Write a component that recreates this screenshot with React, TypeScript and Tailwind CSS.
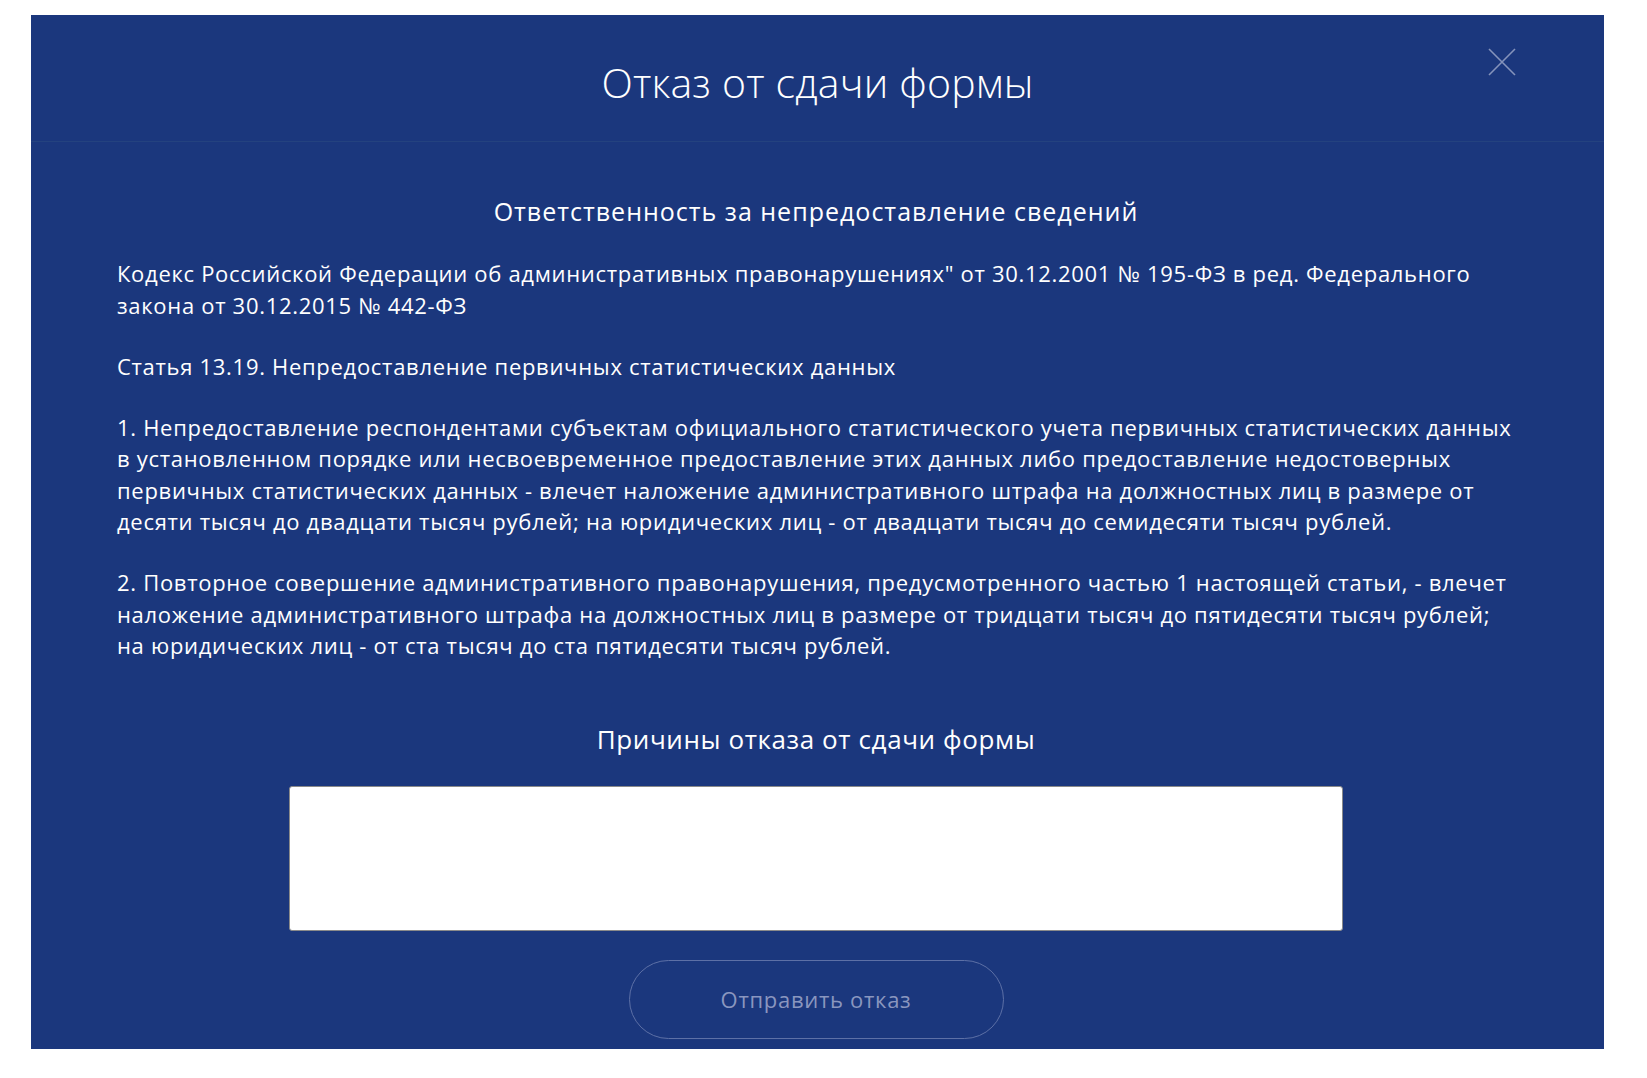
import React from 'react';

const font = { fontFamily: '"Open Sans", "Liberation Sans", sans-serif' };

export default function App() {
    const [reason, setReason] = React.useState('');

    return (
        <div className="w-full h-[1078px] bg-white pt-[15px] pl-[31px]" style={font}>
            <div className="w-[1573px] h-[1034px] bg-[#1b377d] overflow-hidden flex flex-col">
                {/* Header */}
                <div className="relative h-[127px] shrink-0 border-b border-[#24427f] flex items-center justify-center pt-[10px]">
                    <h1 className="text-[41px] font-light text-white tracking-[0.2px]">Отказ от сдачи формы</h1>
                    <button className="absolute right-[88px] top-[33px] w-[28px] h-[28px] text-[#8593bb]">
                        <svg viewBox="0 0 28 28" className="w-full h-full" fill="none" stroke="currentColor" strokeWidth="1.6">
                            <path d="M1 1L27 27M27 1L1 27" />
                        </svg>
                    </button>
                </div>

                {/* Body */}
                <div className="pl-[86px] pr-[89px] pt-[53px] text-white">
                    <h2 className="text-center text-[25px] leading-[32px] tracking-[1px] mb-[31px]">
                        Ответственность за непредоставление сведений
                    </h2>
                    <div className="-mr-[8px] text-[22px] leading-[31.5px] tracking-[0.7px] space-y-[29.5px]">
                        <p>
                            Кодекс Российской Федерации об административных правонарушениях" от 30.12.2001 № 195-ФЗ в ред. Федерального закона от 30.12.2015 № 442-ФЗ
                        </p>
                        <p>Статья 13.19. Непредоставление первичных статистических данных</p>
                        <p>
                            1. Непредоставление респондентами субъектам официального статистического учета первичных статистических данных в установленном порядке или несвоевременное предоставление этих данных либо предоставление недостоверных первичных статистических данных - влечет наложение административного штрафа на должностных лиц в размере от десяти тысяч до двадцати тысяч рублей; на юридических лиц - от двадцати тысяч до семидесяти тысяч рублей.
                        </p>
                        <p>
                            2. Повторное совершение административного правонарушения, предусмотренного частью 1 настоящей статьи, - влечет наложение административного штрафа на должностных лиц в размере от тридцати тысяч до пятидесяти тысяч рублей; на юридических лиц - от ста тысяч до ста пятидесяти тысяч рублей.
                        </p>
                    </div>

                    <h3 className="text-center text-[26px] leading-[34px] tracking-[0.6px] mt-[60px]">Причины отказа от сдачи формы</h3>

                    <div className="flex flex-col items-center mt-[30px]">
                        <textarea
                            value={reason}
                            onChange={e => setReason(e.target.value)}
                            className="w-[1054px] h-[145px] bg-white rounded-[3px] border border-[#8a8a8a] resize-none outline-none text-black p-3"
                        />
                        <button className="mt-[29px] w-[375px] h-[79px] rounded-full border border-[#5d70a6] text-[#8a96bf] text-[22px] tracking-[0.7px]">
                            Отправить отказ
                        </button>
                    </div>
                </div>
            </div>
        </div>
    );
}
